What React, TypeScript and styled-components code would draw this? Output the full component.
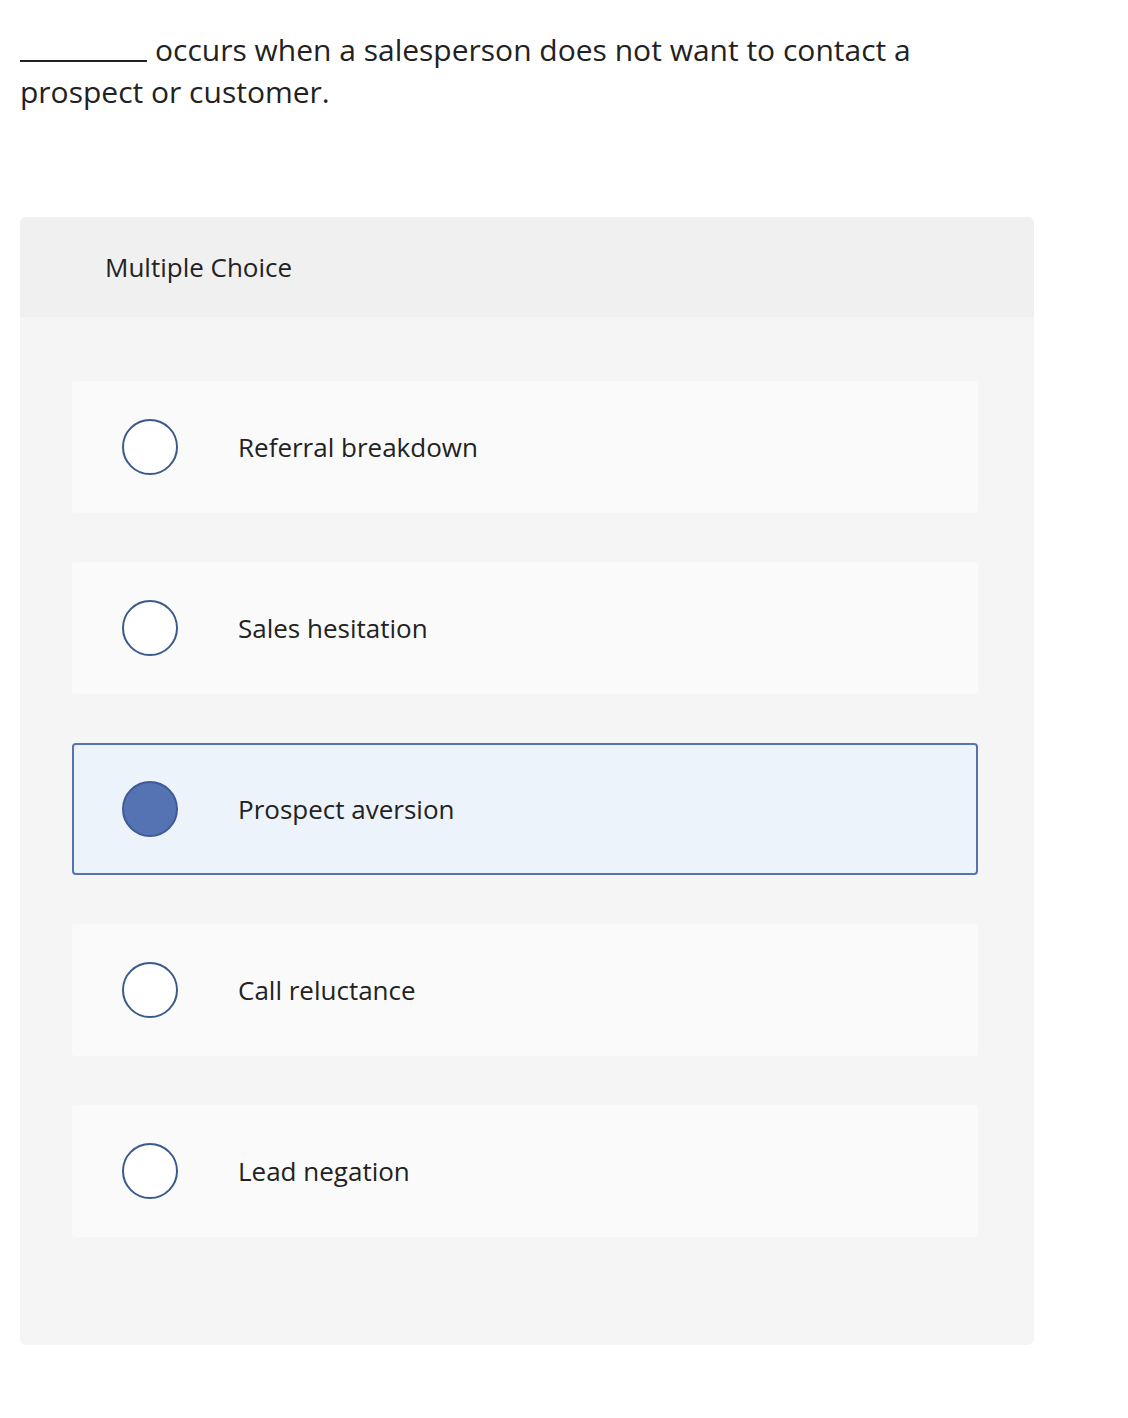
import React, { useState } from "react";
import styled, { createGlobalStyle } from "styled-components";

const Global = createGlobalStyle`
  html, body { margin: 0; padding: 0; background: #ffffff; }
  body { font-family: "Open Sans", Lato, Arial, sans-serif; color: #222; }
`;

const Page = styled.div`
  padding: 29px 20px 72px 20px;
  width: 1014px;
`;

const Question = styled.p`
  margin: 0 0 104px 0;
  font-size: 30px;
  line-height: 42px;
  color: #222;
  font-weight: 400;
`;

const Blank = styled.span`
  display: inline-block;
  width: 127px;
  height: 2px;
  background: #222;
  vertical-align: -1px;
  margin-right: 8px;
`;

const Card = styled.section`
  background: #f5f5f5;
  border-radius: 6px;
  overflow: hidden;
`;

const Header = styled.div`
  height: 100px;
  background: #f0f0f0;
  display: flex;
  align-items: center;
  padding-left: 85px;
  font-size: 26px;
  color: #222;
`;

const List = styled.div`
  display: flex;
  flex-direction: column;
  gap: 49px;
  padding: 64px 56px 108px 52px;
`;

const Option = styled.label<{ $selected: boolean }>`
  height: 132px;
  box-sizing: border-box;
  display: flex;
  align-items: center;
  padding-left: ${(p) => (p.$selected ? 48 : 50)}px;
  background: ${(p) => (p.$selected ? "#ecf3fb" : "#fafafa")};
  border: ${(p) => (p.$selected ? "2px solid #5573b3" : "none")};
  border-radius: 4px;
  cursor: pointer;
`;

const Radio = styled.span<{ $selected: boolean }>`
  width: 56px;
  height: 56px;
  box-sizing: border-box;
  border-radius: 50%;
  border: 2px solid ${(p) => (p.$selected ? "#3f5a94" : "#3b5a8c")};
  background: ${(p) => (p.$selected ? "#5573b3" : "#ffffff")};
  flex-shrink: 0;
`;

const Label = styled.span`
  margin-left: 60px;
  font-size: 26px;
  color: #222;
`;

const options = [
  "Referral breakdown",
  "Sales hesitation",
  "Prospect aversion",
  "Call reluctance",
  "Lead negation",
];

export default function App() {
  const [sel, setSel] = useState(2);
  return (
    <Page>
      <Global />
      <Question>
        <Blank aria-label="blank" />occurs when a salesperson does not want to contact a
        <br />
        prospect or customer.
      </Question>
      <Card>
        <Header>Multiple Choice</Header>
        <List>
          {options.map((o, i) => (
            <Option key={o} $selected={sel === i} onClick={() => setSel(i)}>
              <Radio $selected={sel === i} />
              <Label>{o}</Label>
            </Option>
          ))}
        </List>
      </Card>
    </Page>
  );
}
